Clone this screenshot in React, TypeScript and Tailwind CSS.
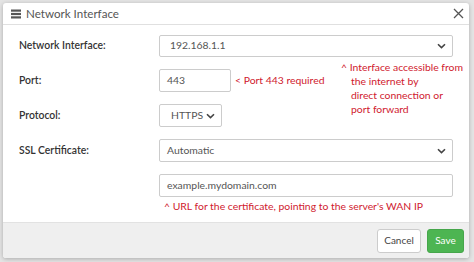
import React from "react";

const Chevron = () => (
  <svg width="9" height="6" viewBox="0 0 9 6" className="shrink-0">
    <path d="M1 1.2 L4.5 4.6 L8 1.2" fill="none" stroke="#444" strokeWidth="1.6" />
  </svg>
);

export default function App() {
  const font = { fontFamily: 'Lato, "Noto Sans", Arial, sans-serif' };
  return (
    <div className="w-[474px] h-[262px] bg-[#e4e4e4] p-[3px] overflow-hidden whitespace-nowrap" style={font}>
      <div className="w-[466px] h-[255px] bg-white rounded-[3px] shadow-[0_1px_4px_rgba(0,0,0,0.25)] flex flex-col overflow-hidden">
        {/* header */}
        <div className="h-[22px] border-b border-[#e0e0e0] flex items-center pl-[8px] pr-[5px]">
          <svg width="10" height="10" viewBox="0 0 10 10" className="mr-[5px]">
            <rect x="0" y="0.5" width="10" height="2.2" fill="#555" />
            <rect x="0" y="3.9" width="10" height="2.2" fill="#555" />
            <rect x="0" y="7.3" width="10" height="2.2" fill="#555" />
          </svg>
          <span className="text-[11.6px] text-[#555] leading-none">Network Interface</span>
          <div className="ml-auto">
            <svg width="11" height="11" viewBox="0 0 11 11">
              <path d="M1 1 L10 10 M10 1 L1 10" stroke="#555" strokeWidth="1.3" />
            </svg>
          </div>
        </div>
        {/* body */}
        <div className="flex-1 pl-[16px] pr-[16px] pt-[9px] flex flex-col gap-[12px] text-[10.4px]">
          <div className="flex items-center h-[23px]">
            <div className="w-[140px] font-semibold text-[#333]">Network Interface:</div>
            <div className="w-[294px] h-[22px] border border-[#ccc] rounded-[2px] flex items-center pl-[10px] pr-[6px] text-[#555]">
              <span>192.168.1.1</span>
              <span className="ml-auto"><Chevron /></span>
            </div>
          </div>
          <div className="flex items-center h-[23px] relative">
            <div className="w-[140px] font-semibold text-[#333]">Port:</div>
            <div className="w-[72px] h-[23px] border border-[#ccc] rounded-[2px] flex items-center pl-[7px] text-[#555]">443</div>
            <span className="ml-[4px] text-[#d0202e]">&lt; Port 443 required</span>
            <div className="absolute left-[322px] top-[-9px] text-[#d0202e] leading-[14px]">
              <div>^ Interface accessible from</div>
              <div className="pl-[10px]">the internet by</div>
              <div className="pl-[10px]">direct connection or</div>
              <div className="pl-[10px]">port forward</div>
            </div>
          </div>
          <div className="flex items-center h-[23px]">
            <div className="w-[140px] font-semibold text-[#333]">Protocol:</div>
            <div className="w-[63px] h-[23px] border border-[#ccc] rounded-[2px] flex items-center pl-[11px] pr-[6px] text-[#555]">
              <span>HTTPS</span>
              <span className="ml-auto"><Chevron /></span>
            </div>
          </div>
          <div className="flex items-center h-[23px]">
            <div className="w-[140px] font-semibold text-[#333]">SSL Certificate:</div>
            <div className="w-[294px] h-[23px] border border-[#ccc] rounded-[2px] flex items-center pl-[7px] pr-[6px] text-[#555]">
              <span>Automatic</span>
              <span className="ml-auto"><Chevron /></span>
            </div>
          </div>
          <div className="flex flex-col pl-[140px]">
            <div className="w-[294px] h-[23px] border border-[#ccc] rounded-[2px] flex items-center pl-[7px] text-[#555]">example.mydomain.com</div>
            <div className="mt-[2px] pl-[5px] text-[#d0202e] leading-[14px]">^ URL for the certificate, pointing to the server's WAN IP</div>
          </div>
        </div>
        {/* footer */}
        <div className="h-[36px] bg-[#efefef] border-t border-[#e2e2e2] flex items-center justify-end gap-[6px] pr-[5px] text-[10px]">
          <div className="w-[44px] h-[24px] bg-white border border-[#ccc] rounded-[3px] flex items-center justify-center text-[#444]">Cancel</div>
          <div className="w-[37px] h-[24px] bg-[#4db552] border border-[#46a64b] rounded-[3px] flex items-center justify-center text-white">Save</div>
        </div>
      </div>
    </div>
  );
}
